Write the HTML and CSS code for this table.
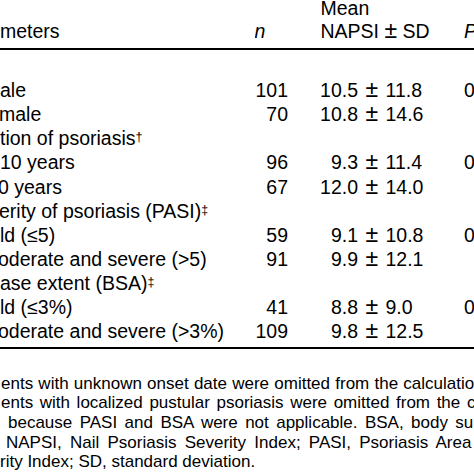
FILE: index.html
```html
<!DOCTYPE html>
<html lang="en">
<head>
<meta charset="utf-8">
<title>NAPSI by parameters</title>
<link rel="stylesheet" href="styles.css">
</head>
<body>
<div class="page">
  <table class="data">
    <colgroup>
      <col class="c-label"><col class="c-n"><col class="c-lv"><col class="c-pm"><col class="c-rv"><col class="c-p">
    </colgroup>
    <thead>
      <tr>
        <th class="label">meters</th>
        <th class="n"><i>n</i></th>
        <th class="mean" colspan="3">Mean<br>NAPSI <span class="pmg">±</span> SD</th>
        <th class="p"><i>P</i></th>
      </tr>
    </thead>
    <tbody>
      <tr><td class="label">&nbsp;</td><td class="n"></td><td class="lv"></td><td class="pm"></td><td class="rv"></td><td class="p"></td></tr>
      <tr><td class="label">ale</td><td class="n">101</td><td class="lv">10.5</td><td class="pm"><span class="pmg">±</span></td><td class="rv">11.8</td><td class="p">0</td></tr>
      <tr><td class="label cut1">male</td><td class="n">70</td><td class="lv">10.8</td><td class="pm"><span class="pmg">±</span></td><td class="rv">14.6</td><td class="p"></td></tr>
      <tr><td class="label">tion of psoriasis<span class="dag">†</span></td><td class="n"></td><td class="lv"></td><td class="pm"></td><td class="rv"></td><td class="p"></td></tr>
      <tr><td class="label">10 years</td><td class="n">96</td><td class="lv">9.3</td><td class="pm"><span class="pmg">±</span></td><td class="rv">11.4</td><td class="p">0</td></tr>
      <tr><td class="label cut2">0 years</td><td class="n">67</td><td class="lv">12.0</td><td class="pm"><span class="pmg">±</span></td><td class="rv">14.0</td><td class="p"></td></tr>
      <tr><td class="label cut1">erity of psoriasis (PASI)<span class="dag">‡</span></td><td class="n"></td><td class="lv"></td><td class="pm"></td><td class="rv"></td><td class="p"></td></tr>
      <tr><td class="label">ld (≤5)</td><td class="n">59</td><td class="lv">9.1</td><td class="pm"><span class="pmg">±</span></td><td class="rv">10.8</td><td class="p">0</td></tr>
      <tr><td class="label cut2">oderate and severe (&gt;5)</td><td class="n">91</td><td class="lv">9.9</td><td class="pm"><span class="pmg">±</span></td><td class="rv">12.1</td><td class="p"></td></tr>
      <tr><td class="label">ase extent (BSA)<span class="dag">‡</span></td><td class="n"></td><td class="lv"></td><td class="pm"></td><td class="rv"></td><td class="p"></td></tr>
      <tr><td class="label">ld (≤3%)</td><td class="n">41</td><td class="lv">8.8</td><td class="pm"><span class="pmg">±</span></td><td class="rv">9.0</td><td class="p">0</td></tr>
      <tr><td class="label cut2">oderate and severe (&gt;3%)</td><td class="n">109</td><td class="lv">9.8</td><td class="pm"><span class="pmg">±</span></td><td class="rv">12.5</td><td class="p"></td></tr>
    </tbody>
  </table>
  <div class="notes">
    <p class="fn fn1">ents with unknown onset date were omitted from the calculation.</p>
    <p class="fn fn2">ents with localized pustular psoriasis were omitted from the calculation</p>
    <p class="fn fn3">because PASI and BSA were not applicable. BSA, body surface area;</p>
    <p class="fn fn4">NAPSI, Nail Psoriasis Severity Index; PASI, Psoriasis Area and</p>
    <p class="fn fn5">rity Index; SD, standard deviation.</p>
  </div>
</div>
</body>
</html>
```
FILE: styles.css
```css
html, body {
  margin: 0;
  padding: 0;
  overflow: hidden;
  background: #fff;
}

body {
  font-family: "Liberation Sans", Arial, sans-serif;
  color: #000;
}

.page {
  width: 474px;
  height: 474px;
  overflow: hidden;
}

.data {
  border-collapse: separate;
  border-spacing: 0;
  table-layout: fixed;
  width: 524px;
  margin-top: -3.3px;
  font-size: 19.5px;
}

.c-label { width: 254.5px; }
.c-n { width: 33.5px; }
.c-lv { width: 70px; }
.c-pm { width: 27.5px; }
.c-rv { width: 78.5px; }
.c-p { width: 60px; }

.data th,
.data td {
  padding: 0;
  font-weight: normal;
  text-align: left;
  white-space: nowrap;
  overflow: hidden;
}

.data thead th {
  line-height: 23px;
  vertical-align: bottom;
  padding-bottom: 4.8px;
  border-bottom: 2px solid #000;
}

.data thead th.mean {
  padding-left: 32.5px;
}

.data tbody td {
  line-height: 24.1px;
}

.data tbody tr:first-child td {
  padding-top: 4.6px;
}

.data tbody tr:last-child td {
  padding-bottom: 3.7px;
  border-bottom: 2.5px solid #000;
}

.data td.n { text-align: right; }
.data td.lv { text-align: right; }
.data td.pm { text-align: center; }
.data td.rv { text-align: left; }

.pmg {
  font-size: 23px;
  line-height: 0;
}

.label.cut1 { text-indent: -1px; }
.label.cut2 { text-indent: -2px; }

.dag {
  font-size: 12.5px;
  vertical-align: 4px;
  line-height: 0;
}

.notes {
  margin-top: 24.6px;
  font-size: 17px;
  line-height: 19.7px;
  white-space: nowrap;
}

.fn { margin: 0; }
.fn1 { padding-left: 1px; word-spacing: 0.5px; }
.fn2 { padding-left: 1px; word-spacing: 1.9px; }
.fn3 { padding-left: 8px; word-spacing: 2.7px; }
.fn4 { padding-left: 6px; word-spacing: 3.5px; }
.fn5 { padding-left: 0; word-spacing: 0; }
```
